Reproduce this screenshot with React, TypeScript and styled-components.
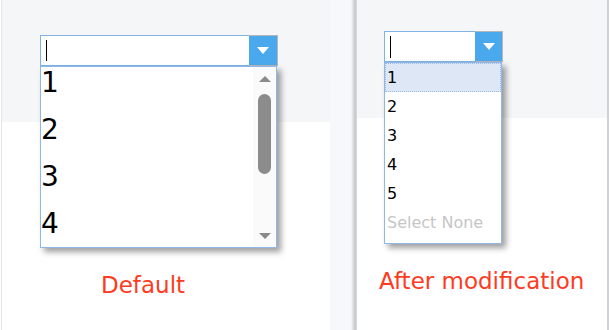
import React from "react";
import styled, { createGlobalStyle } from "styled-components";

const GlobalStyle = createGlobalStyle`
  html, body {
    margin: 0;
    padding: 0;
    background: #ffffff;
  }
  body {
    font-family: "DejaVu Sans", Tahoma, Verdana, sans-serif;
  }
`;

const Page = styled.div`
  display: flex;
  width: 609px;
  height: 330px;
  padding-left: 1px;
  box-sizing: border-box;
  overflow: hidden;
`;

const Panel = styled.div<{ $w: number; $band: number; $padX: number; $padY: number }>`
  width: ${(p) => p.$w}px;
  flex-shrink: 0;
  box-sizing: border-box;
  display: flex;
  flex-direction: column;
  align-items: flex-start;
  padding: ${(p) => p.$padY}px 0 0 ${(p) => p.$padX}px;
  background: linear-gradient(
    #f5f6f8 0,
    #f5f6f8 ${(p) => p.$band}px,
    #ffffff ${(p) => p.$band}px
  );
`;

const LeftPanel = styled(Panel)`
  border-left: 1px solid #e3e5e8;
`;

const RightPanel = styled(Panel)`
  border-right: 2px solid #cfd1d5;
`;

const Gutter = styled.div`
  width: 27px;
  flex-shrink: 0;
  background: linear-gradient(
    to right,
    #f7f8fb 0,
    #f7f8fb 21px,
    #e9ebee 22px,
    #c6c8cc 25px,
    #d8dade 27px
  );
`;

const Combo = styled.div<{ $w: number }>`
  width: ${(p) => p.$w}px;
  display: flex;
  flex-direction: column;
`;

const Field = styled.div`
  display: flex;
  height: 31px;
`;

const TextBox = styled.div`
  flex: 1;
  box-sizing: border-box;
  border: 1px solid #80b3e4;
  border-right: none;
  background: #ffffff;
  display: flex;
  align-items: center;
  padding-left: 5px;
`;

const Caret = styled.span<{ $h: number }>`
  width: 1px;
  height: ${(p) => p.$h}px;
  background: #000000;
`;

const DropButton = styled.div<{ $w: number }>`
  width: ${(p) => p.$w}px;
  box-sizing: border-box;
  background: #4aa8ec;
  border: 1px solid #b4b6b9;
  border-left: none;
  display: flex;
  align-items: center;
  justify-content: center;
`;

const List = styled.div<{ $w: number }>`
  width: ${(p) => p.$w}px;
  height: 182px;
  box-sizing: border-box;
  border: 1px solid #8fb8e8;
  background: #ffffff;
  box-shadow: 4px 4px 6px rgba(0, 0, 0, 0.38);
  display: flex;
  overflow: hidden;
  position: relative;
  z-index: 1;
`;

const Items = styled.div`
  flex: 1;
  display: flex;
  flex-direction: column;
`;

const BigItem = styled.div`
  font-size: 28px;
  line-height: 32px;
  padding-bottom: 15px;
  color: #000000;
  flex-shrink: 0;
`;

const SmallItem = styled.div<{ $active?: boolean; $muted?: boolean }>`
  height: 29px;
  box-sizing: border-box;
  flex-shrink: 0;
  font-size: 16px;
  line-height: 26px;
  padding: 1px 0 0 1px;
  border: 1px dotted ${(p) => (p.$active ? "#9dbbe2" : "transparent")};
  background: ${(p) => (p.$active ? "#dde7f5" : "transparent")};
  color: ${(p) => (p.$muted ? "#c6c6c6" : "#000000")};
`;

const ScrollBar = styled.div`
  width: 23px;
  background: #fafafa;
  display: flex;
  flex-direction: column;
  align-items: center;
  padding: 9px 0 8px;
`;

const Thumb = styled.div`
  width: 13px;
  height: 80px;
  border-radius: 7px;
  background: #8c8c8c;
  margin-top: 12px;
  flex: 1 0 auto;
  max-height: 80px;
`;

const ArrowSpacer = styled.div`
  flex: 1;
`;

const Caption = styled.div<{ $x: number }>`
  margin: 23px 0 0 ${(p) => p.$x}px;
  font-size: 23px;
  line-height: 28px;
  color: #ff3b1f;
  white-space: nowrap;
`;

const Tri = ({ up, color, w, h }: { up?: boolean; color: string; w: number; h: number }) => (
  <svg width={w} height={h} viewBox={`0 0 ${w} ${h}`} style={{ display: "block", flexShrink: 0 }}>
    <polygon points={up ? `0,${h} ${w / 2},0 ${w},${h}` : `0,0 ${w},0 ${w / 2},${h}`} fill={color} />
  </svg>
);

const DownButton = ({ w }: { w: number }) => (
  <DropButton $w={w}>
    <Tri color="#ffffff" w={12} h={7} />
  </DropButton>
);

export default function App() {
  return (
    <>
      <GlobalStyle />
      <Page>
        <LeftPanel $w={329} $band={122} $padX={38} $padY={35}>
          <Combo $w={238}>
            <Field>
              <TextBox>
                <Caret $h={21} />
              </TextBox>
              <DownButton w={29} />
            </Field>
            <List $w={237}>
              <Items>
                {["1", "2", "3", "4"].map((n) => (
                  <BigItem key={n}>{n}</BigItem>
                ))}
              </Items>
              <ScrollBar>
                <Tri up color="#8a8a8a" w={12} h={6} />
                <Thumb />
                <ArrowSpacer />
                <Tri color="#8a8a8a" w={12} h={6} />
              </ScrollBar>
            </List>
          </Combo>
          <Caption $x={61}>Default</Caption>
        </LeftPanel>
        <Gutter />
        <RightPanel $w={252} $band={118} $padX={27} $padY={31}>
          <Combo $w={119}>
            <Field>
              <TextBox>
                <Caret $h={22} />
              </TextBox>
              <DownButton w={28} />
            </Field>
            <List $w={118}>
              <Items>
                <SmallItem $active>1</SmallItem>
                <SmallItem>2</SmallItem>
                <SmallItem>3</SmallItem>
                <SmallItem>4</SmallItem>
                <SmallItem>5</SmallItem>
                <SmallItem $muted>Select None</SmallItem>
              </Items>
            </List>
          </Combo>
          <Caption $x={-5}>After modification</Caption>
        </RightPanel>
      </Page>
    </>
  );
}
